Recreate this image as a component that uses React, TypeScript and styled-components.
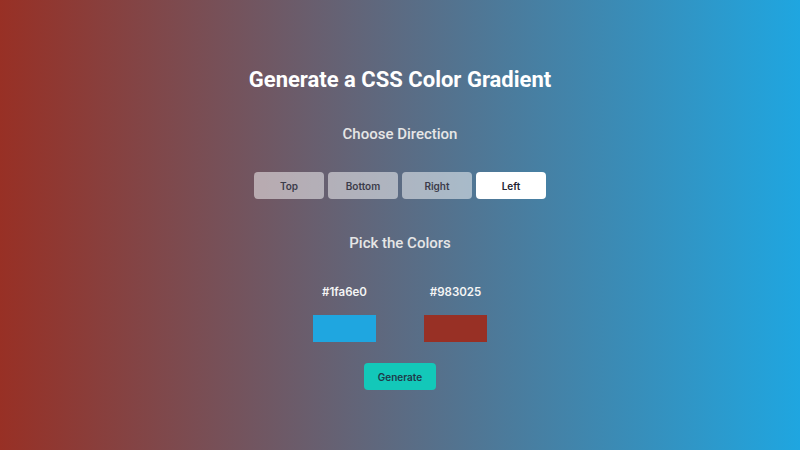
import React, { useState } from "react";
import styled, { createGlobalStyle } from "styled-components";

const GlobalStyle = createGlobalStyle`
    html, body {
        margin: 0;
        padding: 0;
    }
    body {
        font-family: Roboto, "Liberation Sans", sans-serif;
    }
`;

const directions = ["Top", "Bottom", "Right", "Left"];

const Page = styled.div<{ $from: string; $to: string; $dir: string }>`
    width: 800px;
    height: 450px;
    box-sizing: border-box;
    padding-top: 66px;
    display: flex;
    flex-direction: column;
    align-items: center;
    background: ${({ $dir, $from, $to }) => `linear-gradient(to ${$dir}, ${$from}, ${$to})`};
`;

const Title = styled.h1`
    margin: 0;
    font-size: 22px;
    line-height: 28px;
    font-weight: 700;
    color: #ffffff;
`;

const Subtitle = styled.h2<{ $top: number }>`
    margin: ${({ $top }) => $top}px 0 0;
    font-size: 15px;
    line-height: 20px;
    font-weight: 500;
    color: #e6e6e6;
`;

const ButtonRow = styled.div`
    display: flex;
    gap: 4px;
    margin-top: 28px;
`;

const DirButton = styled.button<{ $active: boolean }>`
    width: 70px;
    height: 27px;
    border: none;
    border-radius: 4px;
    font-family: Inter, "Liberation Sans", sans-serif;
    font-size: 10px;
    font-weight: 600;
    color: ${({ $active }) => ($active ? "#222230" : "#3c3c4a")};
    background: ${({ $active }) => ($active ? "#ffffff" : "rgba(255, 255, 255, 0.5)")};
    cursor: pointer;
`;

const ColorRow = styled.div`
    display: flex;
    gap: 48px;
    margin-top: 31px;
`;

const ColorPick = styled.div`
    display: flex;
    flex-direction: column;
    align-items: center;
    gap: 15px;
`;

const ColorLabel = styled.span`
    font-family: Inter, "Liberation Sans", sans-serif;
    font-size: 11.5px;
    line-height: 16px;
    font-weight: 600;
    color: #f5f5f5;
`;

const Swatch = styled.div<{ $color: string }>`
    width: 63px;
    height: 27px;
    background: ${({ $color }) => $color};
`;

const GenerateButton = styled.button`
    margin-top: 21px;
    width: 72px;
    height: 27px;
    border: none;
    border-radius: 4px;
    background: #13c8b9;
    color: #1f3a4a;
    font-family: Inter, "Liberation Sans", sans-serif;
    font-size: 10px;
    font-weight: 600;
    cursor: pointer;
`;

const App = () => {
    const [dir, setDir] = useState("Left");
    const color1 = "#1fa6e0";
    const color2 = "#983025";

    return (
        <>
            <GlobalStyle />
            <Page $dir={dir.toLowerCase()} $from={color1} $to={color2}>
                <Title>Generate a CSS Color Gradient</Title>
                <Subtitle $top={30}>Choose Direction</Subtitle>
                <ButtonRow>
                    {directions.map((d) => (
                        <DirButton key={d} $active={d === dir} onClick={() => setDir(d)}>
                            {d}
                        </DirButton>
                    ))}
                </ButtonRow>
                <Subtitle $top={34}>Pick the Colors</Subtitle>
                <ColorRow>
                    <ColorPick>
                        <ColorLabel>{color1}</ColorLabel>
                        <Swatch $color={color1} />
                    </ColorPick>
                    <ColorPick>
                        <ColorLabel>{color2}</ColorLabel>
                        <Swatch $color={color2} />
                    </ColorPick>
                </ColorRow>
                <GenerateButton>Generate</GenerateButton>
            </Page>
        </>
    );
};

export default App;
